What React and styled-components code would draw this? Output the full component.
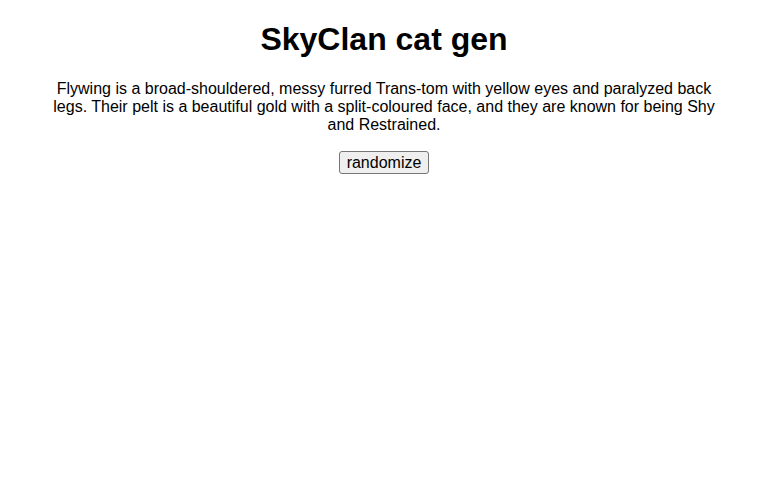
import React from "react";
import styled, { createGlobalStyle } from "styled-components";

const Global = createGlobalStyle`
  body {
    margin: 0 8px;
    background: #ffffff;
    color: #000000;
    font-family: "Liberation Sans", Arial, sans-serif;
  }
`;

const Page = styled.main`
  text-align: center;
`;

const Title = styled.h1`
  font-size: 32px;
  font-weight: bold;
  margin: 21.44px 0;
`;

const Description = styled.p`
  font-size: 16px;
  line-height: 18px;
  max-width: 680px;
  margin: 16px auto 17px;
`;

const Button = styled.button`
  font-family: "Liberation Sans", Arial, sans-serif;
  font-size: 16px;
  line-height: 19px;
  color: #000;
  background: #efefef;
  border: 1px solid #767676;
  border-radius: 3px;
  padding: 1px 7px;
  cursor: pointer;
`;

export default function App() {
  return (
    <Page>
      <Global />
      <Title>SkyClan cat gen</Title>
      <Description>
        Flywing is a broad-shouldered, messy furred Trans-tom with yellow eyes and paralyzed back
        legs. Their pelt is a beautiful gold with a split-coloured face, and they are known for being
        Shy and Restrained.
      </Description>
      <Button>randomize</Button>
    </Page>
  );
}
